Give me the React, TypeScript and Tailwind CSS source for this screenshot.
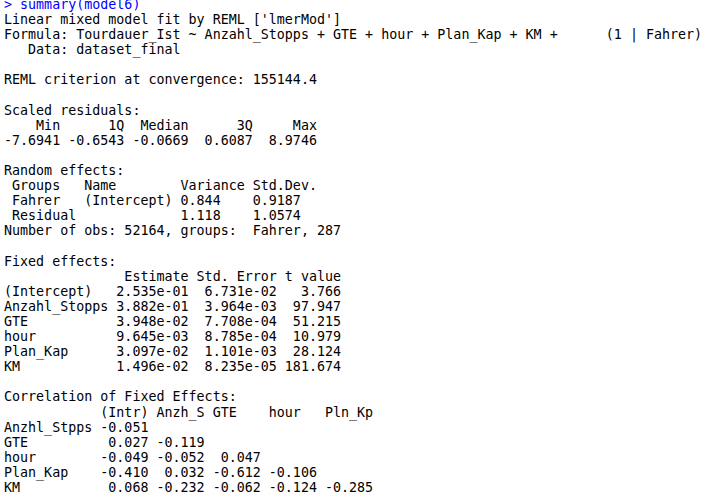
import React from 'react';

const output = `Linear mixed model fit by REML ['lmerMod']
Formula: Tourdauer_Ist ~ Anzahl_Stopps + GTE + hour + Plan_Kap + KM +      (1 | Fahrer)
   Data: dataset_final

REML criterion at convergence: 155144.4

Scaled residuals: 
    Min      1Q  Median      3Q     Max 
-7.6941 -0.6543 -0.0669  0.6087  8.9746 

Random effects:
 Groups   Name        Variance Std.Dev.
 Fahrer   (Intercept) 0.844    0.9187  
 Residual             1.118    1.0574  
Number of obs: 52164, groups:  Fahrer, 287

Fixed effects:
               Estimate Std. Error t value
(Intercept)   2.535e-01  6.731e-02   3.766
Anzahl_Stopps 3.882e-01  3.964e-03  97.947
GTE           3.948e-02  7.708e-04  51.215
hour          9.645e-03  8.785e-04  10.979
Plan_Kap      3.097e-02  1.101e-03  28.124
KM            1.496e-02  8.235e-05 181.674

Correlation of Fixed Effects:
            (Intr) Anzh_S GTE    hour   Pln_Kp
Anzhl_Stpps -0.051                            
GTE          0.027 -0.119                     
hour        -0.049 -0.052  0.047              
Plan_Kap    -0.410  0.032 -0.612 -0.106       
KM           0.068 -0.232 -0.062 -0.124 -0.285`;

const App: React.FC = () => {
    return (
        <div className="w-[705px] h-[495px] overflow-hidden bg-white">
            <pre className="mt-[-3px] pl-[4px] font-['DejaVu_Sans_Mono',monospace] text-[13.33px] leading-[15.1px] text-black whitespace-pre">
                <span className="text-[#0000ff]">{'> summary(model6)'}</span>
                {'\n' + output}
            </pre>
        </div>
    );
};

export default App;
